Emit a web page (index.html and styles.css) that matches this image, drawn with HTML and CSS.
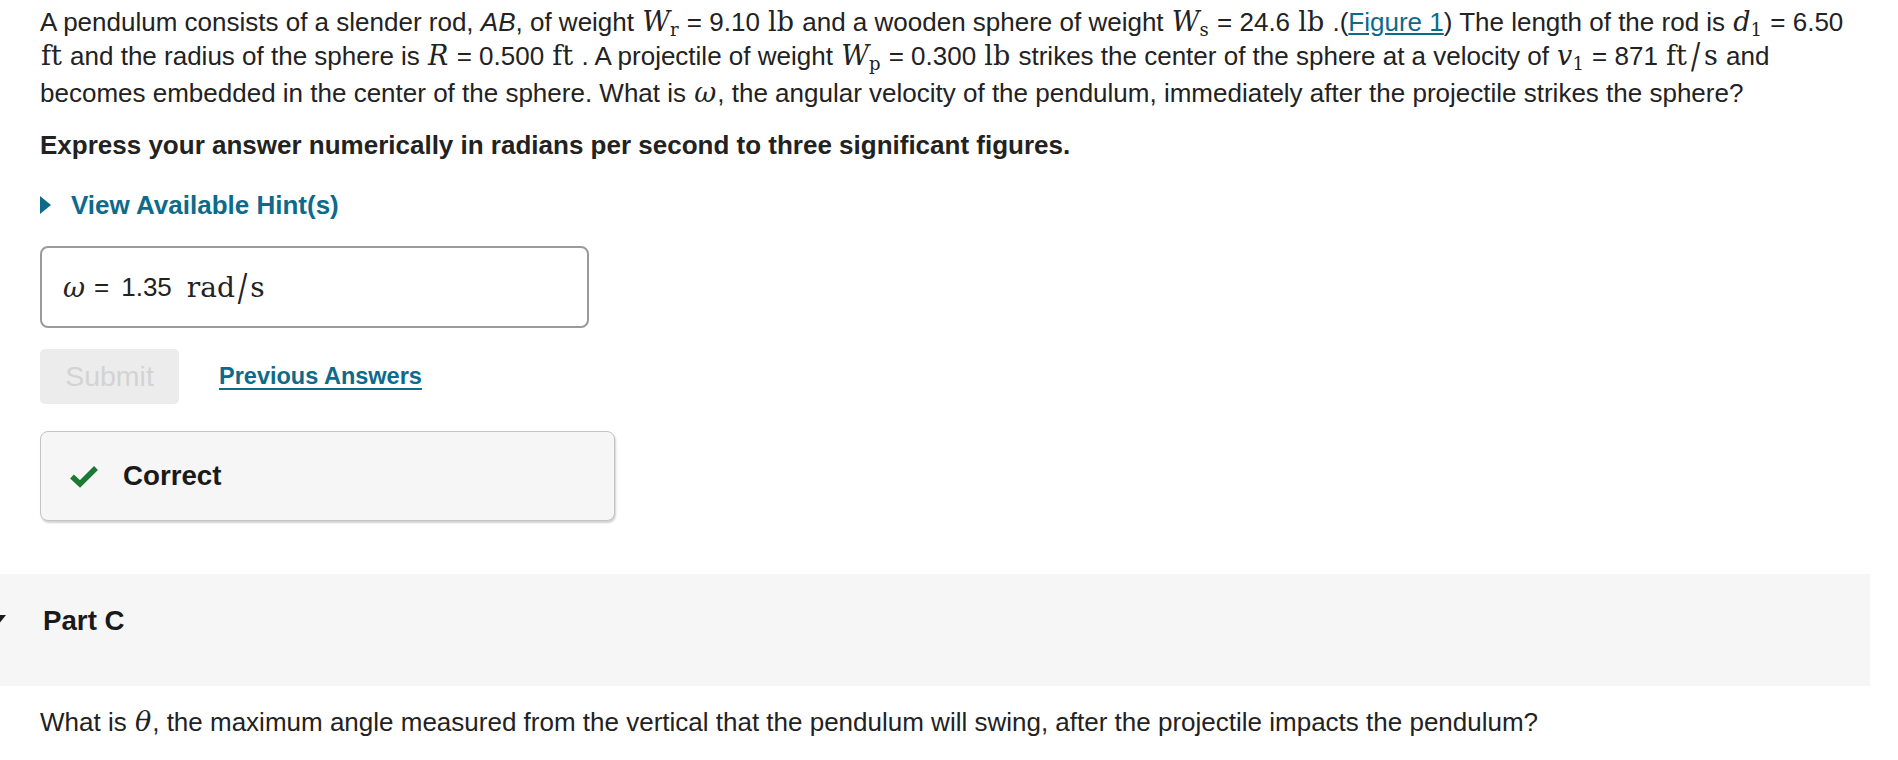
FILE: index.html
```html
<!DOCTYPE html>
<html>
<head>
<meta charset="utf-8">
<link rel="stylesheet" href="styles.css">
</head>
<body>
<div class="page">
  <div class="content">
    <p class="question"><span class="ln">A pendulum consists of a slender rod, <i>AB</i>, of weight <span class="m"><i>W</i><sub>r</sub></span> = 9.10 <span class="m">lb</span> and a wooden sphere of weight <span class="m"><i>W</i><sub>s</sub></span> = 24.6 <span class="m">lb</span> .(<a class="link" href="#">Figure 1</a>) The length of the rod is <span class="m"><i>d</i><sub>1</sub></span> = 6.50</span><span class="ln"><span class="m">ft</span> and the radius of the sphere is <span class="m"><i>R</i></span> = 0.500 <span class="m">ft</span> . A projectile of weight <span class="m"><i>W</i><sub>p</sub></span> = 0.300 <span class="m">lb</span> strikes the center of the sphere at a velocity of <span class="m"><i>v</i><sub>1</sub></span> = 871 <span class="m">ft<span class="slash">/</span>s</span> and</span><span class="ln ln-last">becomes embedded in the center of the sphere. What is <span class="m"><i>ω</i></span>, the angular velocity of the pendulum, immediately after the projectile strikes the sphere?</span></p>
    <p class="instr">Express your answer numerically in radians per second to three significant figures.</p>
    <div class="hint"><span class="tri-right"></span><span>View Available Hint(s)</span></div>
    <div class="answer-box">
      <span class="m"><i>ω</i></span><span class="eq">=</span><span class="val">1.35</span><span class="m unit">rad<span class="slash">/</span>s</span>
    </div>
    <div class="actions">
      <button class="submit" disabled>Submit</button>
      <a class="prev" href="#">Previous Answers</a>
    </div>
    <div class="feedback">
      <svg class="check" width="30" height="24" viewBox="0 0 30 24"><path d="M3 12.5 L11 20 L27 4" fill="none" stroke="#1a7a34" stroke-width="5.5" stroke-linejoin="miter"/></svg>
      <span>Correct</span>
    </div>
  </div>
  <div class="part-head"><span class="tri-down"></span><span>Part C</span></div>
  <div class="content">
    <p class="question2">What is <span class="m"><i>θ</i></span>, the maximum angle measured from the vertical that the pendulum will swing, after the projectile impacts the pendulum?</p>
  </div>
</div>
</body>
</html>
```

FILE: styles.css
```css
html, body {
  margin: 0;
  padding: 0;
  background: #ffffff;
}
body {
  font-family: "Liberation Sans", Arial, sans-serif;
  font-size: 26px;
  color: #222222;
}
.page {
  width: 1870px;
}
.content {
  padding: 0 40px;
}
.question {
  margin: 0;
  padding-top: 5px;
  line-height: 34px;
  white-space: nowrap;
}
.ln {
  display: block;
  height: 34px;
}
.ln-last {
  margin-top: 3px;
}
.m {
  font-family: "DejaVu Serif", "Liberation Serif", serif;
  font-size: 27px;
  padding: 0 1px;
}
.m i {
  font-style: italic;
}
.m sub {
  font-size: 18px;
  vertical-align: -5px;
  line-height: 0;
  font-style: normal;
}
.slash {
  display: inline-block;
  transform: scaleY(1.3);
  margin: 0 4px;
}
.link {
  color: #0e6a8a;
  text-decoration: underline;
}
.instr {
  margin: 18px 0 0;
  font-weight: bold;
  line-height: 34px;
}
.hint {
  margin-top: 26px;
  display: flex;
  align-items: center;
  gap: 20px;
  color: #0e6a8a;
  font-weight: bold;
  line-height: 34px;
}
.tri-right {
  width: 0;
  height: 0;
  border-top: 9px solid transparent;
  border-bottom: 9px solid transparent;
  border-left: 11px solid #0e6a8a;
}
.answer-box {
  margin-top: 24px;
  width: 549px;
  height: 82px;
  border: 2px solid #9a9a9a;
  border-radius: 8px;
  display: flex;
  align-items: center;
  padding-left: 20px;
  box-sizing: border-box;
}
.answer-box .eq {
  margin: 0 12px 0 8px;
}
.answer-box .val {
  margin-right: 15px;
}
.answer-box .unit {
  font-size: 28px;
  padding: 0;
}
.answer-box .unit .slash {
  margin: 0 3px;
}
.actions {
  margin-top: 21px;
  display: flex;
  align-items: center;
  gap: 40px;
}
.submit {
  width: 139px;
  height: 55px;
  border: none;
  border-radius: 5px;
  background: #ececec;
  color: #d3d3d3;
  font-family: "Liberation Sans", Arial, sans-serif;
  font-size: 28.5px;
  padding: 0;
}
.prev {
  color: #0e6a8a;
  font-size: 23.5px;
  font-weight: bold;
  text-decoration: underline;
  text-underline-offset: 4px;
  text-decoration-thickness: 2px;
}
.feedback {
  margin-top: 27px;
  width: 575px;
  height: 90px;
  box-sizing: border-box;
  border: 1px solid #c4c4c4;
  border-radius: 8px;
  background: #f6f6f6;
  box-shadow: 1px 2px 2px rgba(0, 0, 0, 0.18);
  display: flex;
  align-items: center;
  padding-left: 28px;
  gap: 24px;
  font-weight: bold;
  font-size: 27.7px;
  color: #1a1a1a;
}
.part-head {
  margin-top: 53px;
  height: 112px;
  box-sizing: border-box;
  padding-top: 30px;
  background: #f6f6f6;
  display: flex;
  align-items: flex-start;
  font-weight: bold;
  font-size: 27.7px;
  line-height: 34px;
  color: #1a1a1a;
}
.tri-down {
  width: 0;
  height: 0;
  border-left: 8px solid transparent;
  border-right: 8px solid transparent;
  border-top: 10px solid #1a1a1a;
  margin-left: -10px;
  margin-right: 37px;
  margin-top: 11px;
}
.question2 {
  margin: 19px 0 0;
  line-height: 34px;
  white-space: nowrap;
}
```
